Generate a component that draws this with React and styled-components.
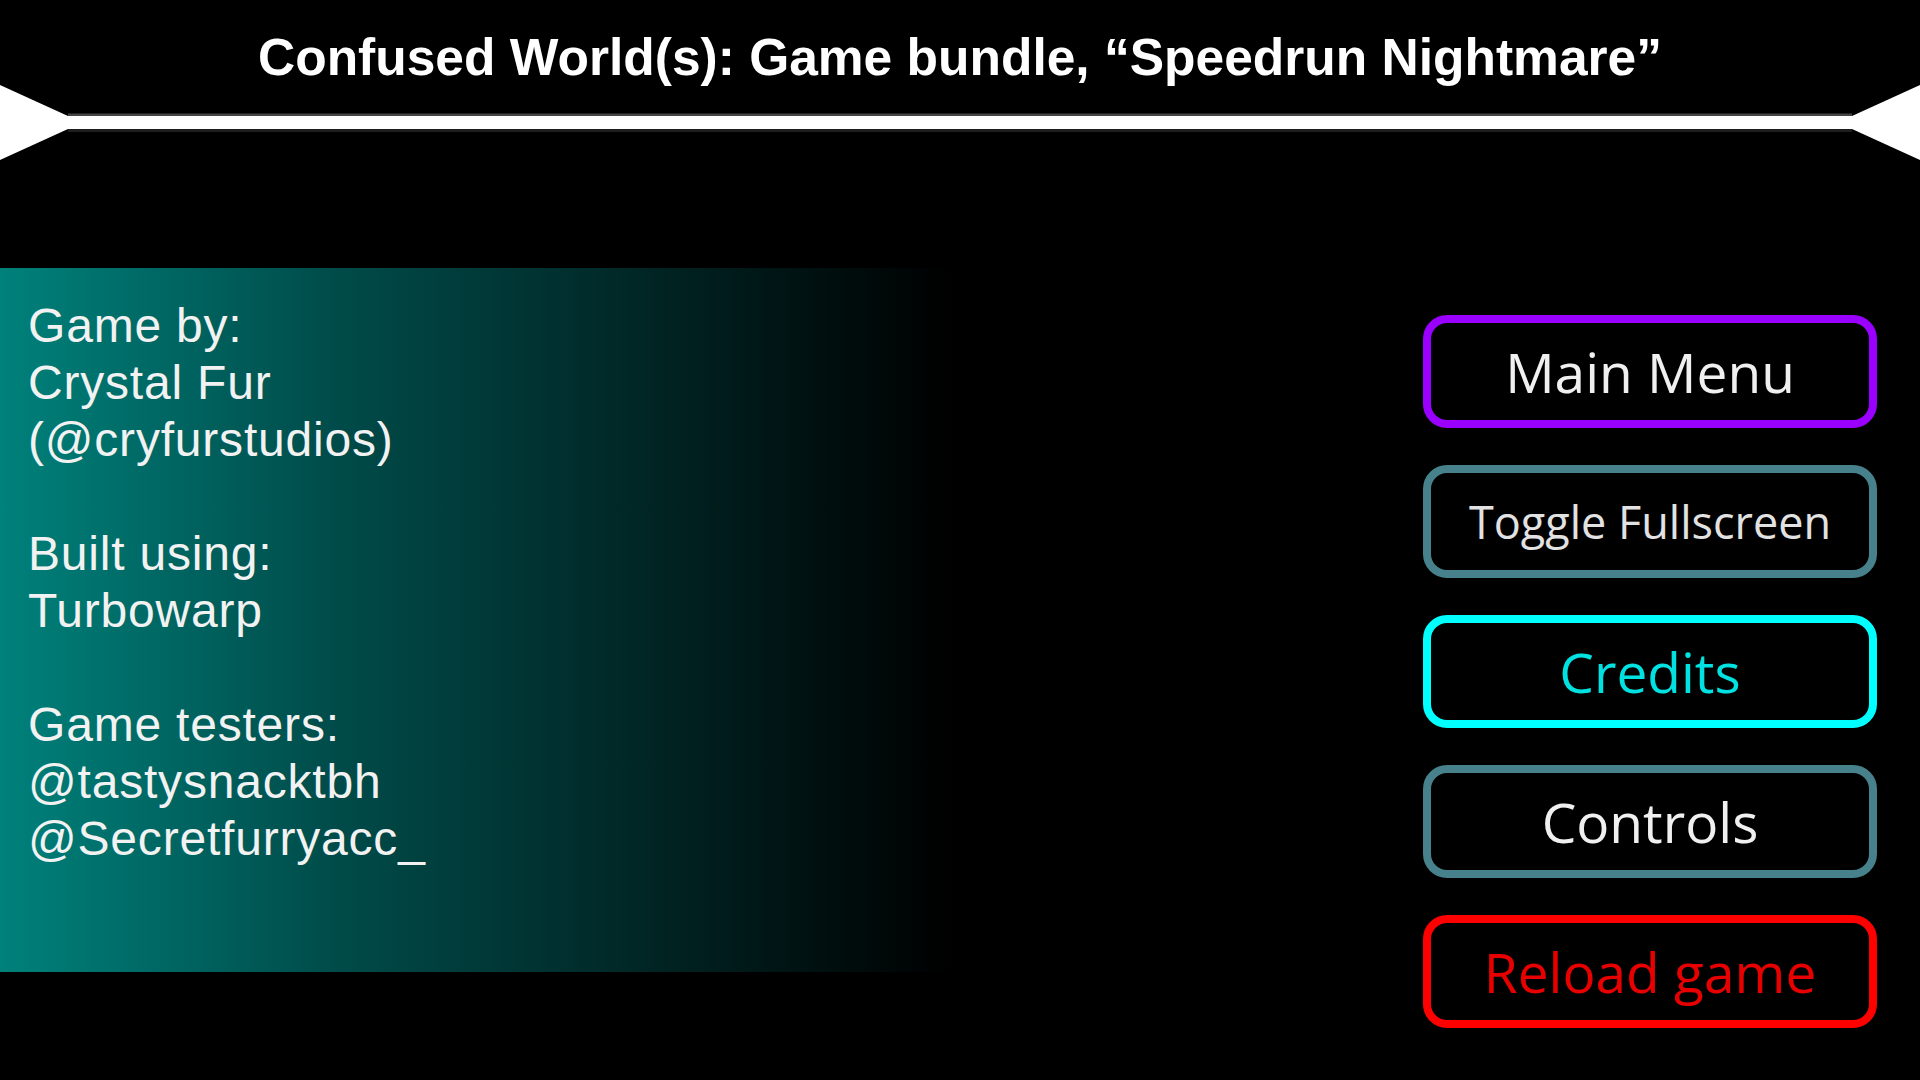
import React from 'react';
import styled, { createGlobalStyle } from 'styled-components';

const GlobalStyle = createGlobalStyle`
	html, body {
		margin: 0;
		padding: 0;
		background: #000000;
	}
	body {
		width: 1920px;
		height: 1080px;
		overflow: hidden;
		font-family: "Open Sans", "Liberation Sans", sans-serif;
	}
`;

const Page = styled.div`
	width: 1920px;
	height: 1080px;
	background: #000000;
	display: flex;
	flex-direction: column;
`;

const Header = styled.h1`
	margin: 0;
	height: 85px;
	box-sizing: border-box;
	padding-top: 30px;
	text-align: center;
	font-family: "Liberation Sans", Arial, sans-serif;
	font-weight: 700;
	font-size: 51.5px;
	line-height: 55px;
	color: #ffffff;
	white-space: nowrap;
`;

const DividerSvg = styled.svg`
	display: block;
	width: 1920px;
	height: 75px;
`;

const Main = styled.main`
	margin-top: 108px;
	display: flex;
	justify-content: space-between;
	align-items: flex-start;
	padding-right: 43px;
`;

const CreditsPanel = styled.section`
	width: 950px;
	height: 704px;
	box-sizing: border-box;
	padding: 29px 0 0 28px;
	background: linear-gradient(90deg, #00817b 0%, #004c4a 35%, #000000 100%);
	color: #f2f2f2;
	font-family: "Liberation Sans", Arial, sans-serif;
	font-size: 48px;
	line-height: 57px;
	letter-spacing: 0.8px;
`;

const Group = styled.p`
	margin: 0 0 57px;
	white-space: nowrap;
`;

const ButtonColumn = styled.nav`
	margin-top: 47px;
	display: flex;
	flex-direction: column;
	gap: 37px;
`;

const MenuButton = styled.button`
	width: 454px;
	height: 113px;
	box-sizing: border-box;
	display: flex;
	align-items: center;
	justify-content: center;
	background: #000000;
	border: 8px solid ${(p) => p.$border};
	border-radius: 24px;
	color: ${(p) => p.$color};
	font-family: "Open Sans", "Liberation Sans", sans-serif;
	font-size: ${(p) => p.$size || 55}px;
	font-weight: 400;
	padding: 0;
	cursor: pointer;
`;

const buttons = [
	{ label: 'Main Menu', border: '#9900ff', color: '#f0f0f0' },
	{ label: 'Toggle Fullscreen', border: '#47818b', color: '#e2e2e2', size: 45 },
	{ label: 'Credits', border: '#00ffff', color: '#00e2e2' },
	{ label: 'Controls', border: '#47818b', color: '#f0f0f0' },
	{ label: 'Reload game', border: '#ff0000', color: '#e80000' },
];

const Divider = () => (
	<DividerSvg viewBox="0 0 1920 75" aria-hidden="true">
		<rect x="68" y="28.5" width="1784" height="3" fill="#444444" />
		<rect x="68" y="44" width="1784" height="3" fill="#1e1e1e" />
		<polygon
			points="0,0 68,31 1852,31 1920,0 1920,75 1852,44 68,44 0,75"
			fill="#ffffff"
		/>
	</DividerSvg>
);

export default function App() {
	return (
		<Page>
			<GlobalStyle />
			<Header>Confused World(s): Game bundle, “Speedrun Nightmare”</Header>
			<Divider />
			<Main>
				<CreditsPanel>
					<Group>
						Game by:
						<br />
						Crystal Fur
						<br />
						(@cryfurstudios)
					</Group>
					<Group>
						Built using:
						<br />
						Turbowarp
					</Group>
					<Group>
						Game testers:
						<br />
						@tastysnacktbh
						<br />
						@Secretfurryacc_
					</Group>
				</CreditsPanel>
				<ButtonColumn>
					{buttons.map((b) => (
						<MenuButton key={b.label} $border={b.border} $color={b.color} $size={b.size}>
							{b.label}
						</MenuButton>
					))}
				</ButtonColumn>
			</Main>
		</Page>
	);
}
